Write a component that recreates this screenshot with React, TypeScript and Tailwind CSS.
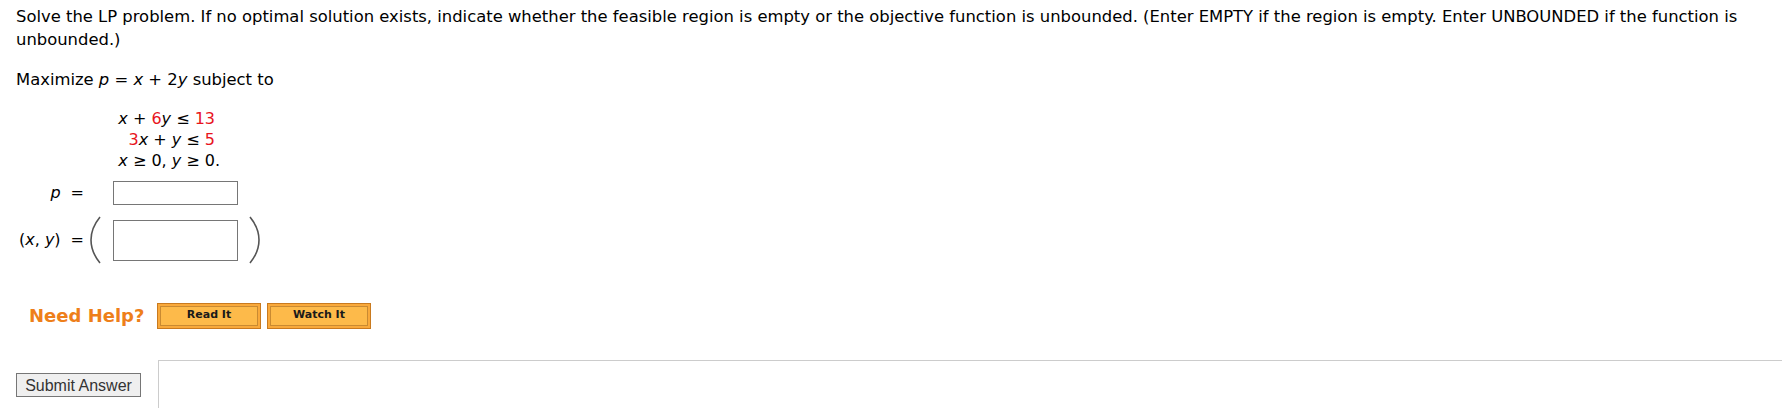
import React from "react";

function Paren({ side }: { side: "l" | "r" }) {
  return (
    <svg width="12" height="48" viewBox="0 0 12 48" aria-hidden>
      {side === "l" ? (
        <path d="M10 1 Q1 12 1 24 Q1 36 10 47" fill="none" stroke="#555" strokeWidth="1.6" />
      ) : (
        <path d="M2 1 Q11 12 11 24 Q11 36 2 47" fill="none" stroke="#555" strokeWidth="1.6" />
      )}
    </svg>
  );
}

function HelpButton({ label }: { label: string }) {
  return (
    <button
      type="button"
      className="h-[26px] w-[104px] border border-[#c97a1f] bg-[#f9a93b] p-[2px]"
    >
      <span className="flex h-full w-full items-center justify-center border border-[#c98a32] bg-[#fdba4a] text-[11px] font-bold text-[#1a1a1a]">
        {label}
      </span>
    </button>
  );
}

export default function App() {
  return (
    <div
      className="h-[408px] w-[1782px] overflow-hidden bg-white text-[16px] text-black"
      style={{ fontFamily: "'DejaVu Sans', Verdana, sans-serif" }}
    >
      <div className="pl-4 pr-[8px] pt-[5px]">
        <p className="text-[16.4px] leading-[23px]">
          Solve the LP problem. If no optimal solution exists, indicate whether the feasible region is
          empty or the objective function is unbounded. (Enter EMPTY if the region is empty. Enter
          UNBOUNDED if the function is unbounded.)
        </p>

        <p className="mt-[17px] text-[16.4px] leading-[23px]">
          Maximize <i>p</i> = <i>x</i> + 2<i>y</i> subject to
        </p>

        {/* constraints */}
        <div className="mt-[17px] w-[199px] text-right leading-[21px]">
          <div>
            <i>x</i> + <span className="text-[#e8141c]">6</span>
            <i>y</i> ≤ <span className="text-[#e8141c]">13</span>
          </div>
          <div>
            <span className="text-[#e8141c]">3</span>
            <i>x</i> + <i>y</i> ≤ <span className="text-[#e8141c]">5</span>
          </div>
          <div>
            <i>x</i> ≥ 0, <i>y</i> ≥ 0<span className="inline-block w-0 text-left">.</span>
          </div>
        </div>

        {/* answer rows */}
        <div className="mt-[10px] grid grid-cols-[68px_29px_125px_24px] items-center gap-y-[11px]">
          <div className="text-right">
            <i>p</i>
            <span className="ml-[10px]">=</span>
          </div>
          <div />
          <input className="h-[24px] w-[125px] border border-[#767676] bg-white outline-none" />
          <div />

          <div className="text-right">
            (<i>x</i>, <i>y</i>)<span className="ml-[10px]">=</span>
          </div>
          <div className="flex justify-end pr-[11px]">
            <Paren side="l" />
          </div>
          <input className="h-[41px] w-[125px] border border-[#767676] bg-white outline-none" />
          <div className="flex pl-[10px]">
            <Paren side="r" />
          </div>
        </div>

        {/* help */}
        <div className="mt-[38px] flex items-center">
          <span className="ml-[13px] w-[128px] text-[18px] font-bold text-[#ee7f1a]">
            Need Help?
          </span>
          <div className="flex gap-[6px]">
            <HelpButton label="Read It" />
            <HelpButton label="Watch It" />
          </div>
        </div>
      </div>

      {/* submit + result panel */}
      <div className="mt-[31px] flex items-start">
        <button
          type="button"
          className="ml-4 mt-[13px] h-[24px] w-[125px] border border-[#767676] bg-[#efefef] text-[16px] text-[#333]"
          style={{ fontFamily: "'Liberation Sans', Arial, sans-serif" }}
        >
          Submit Answer
        </button>
        <div className="ml-[17px] h-[80px] flex-1 border-l border-t border-[#cccccc]" />
      </div>
    </div>
  );
}
